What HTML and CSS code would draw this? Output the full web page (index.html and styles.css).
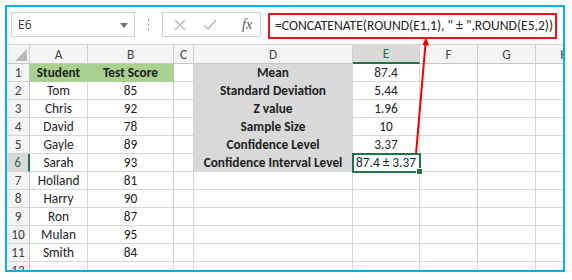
FILE: index.html
```html
<!DOCTYPE html>
<html lang="en">
<head>
    <meta charset="UTF-8">
    <title>Confidence Interval</title>
    <link rel="stylesheet" href="styles.css">
</head>
<body>

<div class="frame">
    <div class="toolbar">
        <div class="namebox">
            <span>E6</span>
            <svg class="caret" width="8" height="5" viewBox="0 0 8 5"><path d="M0 0H8L4 5Z" fill="#707070"/></svg>
        </div>
        <div class="dots"><i></i><i></i><i></i></div>
        <div class="fxbox">
            <svg width="12" height="12" viewBox="0 0 12 12"><path d="M1 1L11 11M11 1L1 11" stroke="#b8b8b8" stroke-width="1.3" fill="none"/></svg>
            <svg width="14" height="12" viewBox="0 0 14 12"><path d="M1 6L5 10L13 1" stroke="#b8b8b8" stroke-width="1.3" fill="none"/></svg>
            <span class="fx">fx</span>
        </div>
        <div class="formula">=CONCATENATE(ROUND(E1,1), " ± ",ROUND(E5,2))</div>
    </div>

    <div class="sheet">
        <div class="h corner"><svg width="12" height="12" viewBox="0 0 12 12"><path d="M12 0V12H0Z" fill="#b9b9b9"/></svg></div>
        <div class="h">A</div><div class="h">B</div><div class="h">C</div><div class="h">D</div><div class="h hsel">E</div><div class="h">F</div><div class="h">G</div><div class="h">H</div>

        <div class="rh">1</div><div class="c g b">Student</div><div class="c g b">Test Score</div><div class="c"></div><div class="c d b">Mean</div><div class="c">87.4</div><div class="c"></div><div class="c"></div><div class="c"></div>
        <div class="rh">2</div><div class="c">Tom</div><div class="c">85</div><div class="c"></div><div class="c d b">Standard Deviation</div><div class="c">5.44</div><div class="c"></div><div class="c"></div><div class="c"></div>
        <div class="rh">3</div><div class="c">Chris</div><div class="c">92</div><div class="c"></div><div class="c d b">Z value</div><div class="c">1.96</div><div class="c"></div><div class="c"></div><div class="c"></div>
        <div class="rh">4</div><div class="c">David</div><div class="c">78</div><div class="c"></div><div class="c d b">Sample Size</div><div class="c">10</div><div class="c"></div><div class="c"></div><div class="c"></div>
        <div class="rh">5</div><div class="c">Gayle</div><div class="c">89</div><div class="c"></div><div class="c d b">Confidence Level</div><div class="c">3.37</div><div class="c"></div><div class="c"></div><div class="c"></div>
        <div class="rh rsel">6</div><div class="c">Sarah</div><div class="c">93</div><div class="c"></div><div class="c d b">Confidence Interval Level</div><div class="c active">87.4 ± 3.37<span class="handle"></span></div><div class="c"></div><div class="c"></div><div class="c"></div>
        <div class="rh">7</div><div class="c">Holland</div><div class="c">81</div><div class="c"></div><div class="c"></div><div class="c"></div><div class="c"></div><div class="c"></div><div class="c"></div>
        <div class="rh">8</div><div class="c">Harry</div><div class="c">90</div><div class="c"></div><div class="c"></div><div class="c"></div><div class="c"></div><div class="c"></div><div class="c"></div>
        <div class="rh">9</div><div class="c">Ron</div><div class="c">87</div><div class="c"></div><div class="c"></div><div class="c"></div><div class="c"></div><div class="c"></div><div class="c"></div>
        <div class="rh">10</div><div class="c">Mulan</div><div class="c">95</div><div class="c"></div><div class="c"></div><div class="c"></div><div class="c"></div><div class="c"></div><div class="c"></div>
        <div class="rh">11</div><div class="c">Smith</div><div class="c">84</div><div class="c"></div><div class="c"></div><div class="c"></div><div class="c"></div><div class="c"></div><div class="c"></div>
        <div class="rh">12</div><div class="c"></div><div class="c"></div><div class="c"></div><div class="c"></div><div class="c"></div><div class="c"></div><div class="c"></div><div class="c"></div>
    </div>
</div>

<svg class="arrow" width="572" height="280" viewBox="0 0 572 280">
    <line x1="416" y1="154" x2="425.4" y2="45" stroke="#f20000" stroke-width="2"/>
    <path d="M426 37L429 45.5L422.5 45Z" fill="#f20000"/>
</svg>

</body>
</html>
```

FILE: styles.css
```css
body {
    margin: 0;
    background: #fff;
    position: relative;
    width: 572px;
    height: 280px;
    overflow: hidden;
    font-family: Carlito, Lato, "Liberation Sans", sans-serif;
}

.frame {
    position: relative;
    margin: 5px 0 0 5px;
    width: 560px;
    height: 267px;
    box-sizing: border-box;
    border: 2px solid #00b0f0;
    overflow: hidden;
    background: #fff;
}

/* formula bar */
.toolbar {
    display: flex;
    align-items: flex-start;
    height: 37px;
    padding: 5px 0 0 4px;
    box-sizing: border-box;
    background: #fff;
}

.namebox {
    width: 124px;
    height: 25px;
    box-sizing: border-box;
    border: 1px solid #d0d0d0;
    display: flex;
    align-items: center;
    justify-content: space-between;
    padding: 0 6px 0 6px;
    font-family: "Open Sans", sans-serif;
    font-size: 12px;
    color: #333;
}

.caret {
    margin-top: 1px;
}

.dots {
    width: 27px;
    height: 25px;
    display: flex;
    flex-direction: column;
    align-items: center;
    justify-content: center;
    gap: 3px;
}

.dots i {
    width: 1px;
    height: 2px;
    background: #a0a0a0;
}

.fxbox {
    width: 99px;
    height: 25px;
    box-sizing: border-box;
    border: 1px solid #d0d0d0;
    display: flex;
    align-items: center;
    padding-left: 11px;
    gap: 17px;
}

.fx {
    font-family: "Liberation Serif", serif;
    font-style: italic;
    font-size: 14px;
    color: #555;
    margin-left: 8px;
}

.formula {
    margin: 1px 0 0 7px;
    width: 289px;
    height: 26px;
    box-sizing: border-box;
    border: 2px solid #e8141a;
    padding: 0 0 0 5px;
    line-height: 22px;
    font-size: 13.6px;
    color: #222;
    white-space: nowrap;
    overflow: hidden;
}

/* grid */
.sheet {
    display: grid;
    grid-template-columns: 23px 58px 86px 20px 159px 67px 58px 58px 58px;
    grid-template-rows: 20px repeat(12, 18px);
    font-size: 13.3px;
    color: #222;
}

.sheet > div {
    box-sizing: border-box;
    border-right: 1px solid #d6d6d6;
    border-bottom: 1px solid #d6d6d6;
    display: flex;
    align-items: center;
    justify-content: center;
    white-space: nowrap;
}

.h {
    background: #f4f4f4;
    color: #444;
    border-top: 1px solid #d6d6d6;
    border-right-color: #cfcfcf !important;
    border-bottom-color: #c6c6c6 !important;
}

.corner {
    justify-content: flex-end !important;
    align-items: flex-end !important;
    padding: 0 2px 2px 0;
}

.hsel {
    background: #dadada;
    border-bottom: 2px solid #217346 !important;
    color: #217346;
}

.rh {
    background: #f4f4f4;
    color: #444;
    border-right-color: #c6c6c6 !important;
}

.rsel {
    background: #dadada;
    border-right: 2px solid #217346 !important;
    color: #217346;
}

.b {
    font-weight: bold;
}

.g {
    background: #a9d08e;
    border-color: #a9d08e !important;
}

.d {
    background: #d9d9d9;
    border-color: #d9d9d9 !important;
}

.active {
    position: relative;
    outline: 2px solid #217346;
    outline-offset: -1px;
    z-index: 1;
}

.handle {
    position: absolute;
    right: -4px;
    bottom: -4px;
    width: 5px;
    height: 5px;
    background: #217346;
    border: 1px solid #fff;
}

.arrow {
    position: absolute;
    left: 0;
    top: 0;
    pointer-events: none;
}
```
